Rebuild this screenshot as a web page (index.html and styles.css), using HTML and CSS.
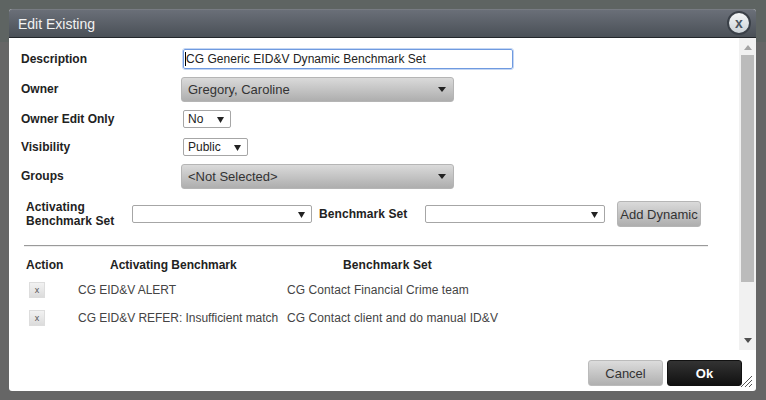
FILE: index.html
```html
<!DOCTYPE html>
<html lang="en">
<head>
    <meta charset="UTF-8">
    <title>Edit Existing</title>
    <link rel="stylesheet" href="styles.css">
</head>
<body>
    <div class="dialog">
        <div class="title-bar">
            <span class="title-text">Edit Existing</span>
            <button class="close-button">x</button>
        </div>

        <div class="dialog-body">
            <div class="form-area">
                <div class="form-row row-description">
                    <label class="row-label">Description</label>
                    <div class="input-wrap">
                        <input class="text-input" type="text" value="CG Generic EID&amp;V Dynamic Benchmark Set">
                        <span class="caret"></span>
                    </div>
                </div>

                <div class="form-row row-owner">
                    <label class="row-label">Owner</label>
                    <div class="drop-button">
                        <span>Gregory, Caroline</span>
                        <span class="drop-arrow"></span>
                    </div>
                </div>

                <div class="form-row row-small">
                    <label class="row-label">Owner Edit Only</label>
                    <select class="plain-select select-no"><option>No</option></select>
                </div>

                <div class="form-row row-small row-visibility">
                    <label class="row-label">Visibility</label>
                    <select class="plain-select select-public"><option>Public</option></select>
                </div>

                <div class="form-row row-groups">
                    <label class="row-label">Groups</label>
                    <div class="drop-button">
                        <span>&lt;Not Selected&gt;</span>
                        <span class="drop-arrow"></span>
                    </div>
                </div>

                <div class="dynamic-row">
                    <label class="dynamic-label">Activating<br>Benchmark Set</label>
                    <select class="plain-select select-wide"><option></option></select>
                    <label class="dynamic-label label-second">Benchmark Set</label>
                    <select class="plain-select select-wide"><option></option></select>
                    <button class="add-button">Add Dynamic</button>
                </div>

                <hr class="divider">

                <div class="list-row list-head">
                    <span class="col-action">Action</span>
                    <span class="col-activating">Activating Benchmark</span>
                    <span class="col-set">Benchmark Set</span>
                </div>
                <div class="list-row list-item">
                    <span class="col-remove"><button class="remove-button">x</button></span>
                    <span class="col-name">CG EID&amp;V ALERT</span>
                    <span class="col-target">CG Contact Financial Crime team</span>
                </div>
                <div class="list-row list-item">
                    <span class="col-remove"><button class="remove-button">x</button></span>
                    <span class="col-name">CG EID&amp;V REFER: Insufficient match</span>
                    <span class="col-target">CG Contact client and do manual ID&amp;V</span>
                </div>
            </div>

            <div class="scrollbar">
                <div class="scroll-up"></div>
                <div class="scroll-thumb"></div>
                <div class="scroll-down"></div>
            </div>
        </div>

        <div class="dialog-footer">
            <button class="footer-button cancel-button">Cancel</button>
            <button class="footer-button ok-button">Ok</button>
            <svg class="resize-grip" width="12" height="12" viewBox="0 0 12 12">
                <path d="M0 11 L11 0 M4 11 L11 4 M8 11 L11 8" stroke="#555" stroke-width="1" fill="none"/>
            </svg>
        </div>
    </div>
</body>
</html>
```

FILE: styles.css
```css
* {
    margin: 0;
    padding: 0;
    box-sizing: border-box;
}

body {
    width: 766px;
    height: 400px;
    padding: 9px 10px 9px 9px;
    overflow: hidden;
    font-family: "Liberation Sans", Arial, sans-serif;
    font-size: 12px;
    color: #333;
    background: linear-gradient(#5e6462 0, #5e6462 42px, #666 42px);
}

.dialog {
    width: 747px;
    height: 382px;
    display: flex;
    flex-direction: column;
    background: white;
    border-radius: 3px;
}

.title-bar {
    height: 29px;
    flex: none;
    display: flex;
    justify-content: space-between;
    align-items: center;
    padding: 0 5px 0 9px;
    background: linear-gradient(#6a6f78, #4a5057);
    border-top: 1px solid #777b82;
    border-bottom: 1px solid #23272b;
    border-radius: 3px 3px 0 0;
}

.title-text {
    font-size: 14px;
    color: #f2f2f2;
}

.close-button {
    width: 24px;
    height: 24px;
    margin-bottom: 2px;
    border: 2px solid #3a4048;
    border-radius: 50%;
    background: linear-gradient(#f4f6f7, #ccd3d8);
    color: #4a5560;
    font-family: "Liberation Sans", Arial, sans-serif;
    font-size: 14px;
    font-weight: bold;
    line-height: 16px;
}

.dialog-body {
    height: 312px;
    flex: none;
    display: flex;
}

.form-area {
    flex: 1;
    padding: 10px 0 0 12px;
}

.form-row {
    display: flex;
    align-items: center;
}

.row-label {
    width: 160px;
    flex: none;
    font-weight: bold;
    color: #222;
}

.row-description {
    height: 22px;
    margin-bottom: 7px;
}

.row-owner,
.row-groups {
    height: 25px;
    margin-bottom: 8px;
}

.row-owner .row-label,
.row-groups .row-label {
    margin-top: -2px;
}

.row-small {
    height: 18px;
    margin-bottom: 10px;
}

.row-visibility {
    margin-bottom: 8px;
}

.row-groups {
    margin-bottom: 12px;
}

.input-wrap {
    position: relative;
    margin-left: 2px;
}

.text-input {
    display: block;
    width: 330px;
    height: 20px;
    padding: 0 2px;
    border: 1px solid #6f9ae0;
    border-radius: 2px;
    outline: 1px solid #c4d6f3;
    font-family: "Liberation Sans", Arial, sans-serif;
    font-size: 12px;
    letter-spacing: 0.05px;
    color: #222;
}

.caret {
    position: absolute;
    left: 2px;
    top: 3px;
    width: 1px;
    height: 14px;
    background: black;
}

.drop-button {
    width: 273px;
    height: 25px;
    display: flex;
    justify-content: space-between;
    align-items: center;
    padding: 0 7px 0 6px;
    background: linear-gradient(#dadada, #aeaeae);
    border: 1px solid #b5b5b5;
    border-radius: 3px;
    font-size: 13px;
    color: #333;
}

.drop-arrow {
    width: 0;
    height: 0;
    border-left: 4px solid transparent;
    border-right: 4px solid transparent;
    border-top: 5px solid #222;
}

.plain-select {
    height: 18px;
    margin-left: 2px;
    padding: 0 0 0 4px;
    border: 1px solid #a6a6a6;
    border-radius: 2px;
    appearance: none;
    font-family: "Liberation Sans", Arial, sans-serif;
    font-size: 12px;
    color: #222;
    background: white url("data:image/svg+xml,%3Csvg xmlns='http://www.w3.org/2000/svg' width='7' height='7'%3E%3Cpath d='M0 1h7L3.5 7z' fill='%23222'/%3E%3C/svg%3E") no-repeat right 6px center;
}

.select-no {
    width: 48px;
}

.select-public {
    width: 65px;
}

.select-wide {
    width: 180px;
    margin-left: 0;
}

.dynamic-row {
    display: flex;
    align-items: center;
    height: 26px;
    padding-left: 5px;
    margin-bottom: 18px;
}

.dynamic-label {
    width: 106px;
    flex: none;
    font-weight: bold;
    line-height: 14px;
    letter-spacing: 0.08px;
    color: #222;
}

.label-second {
    width: 106px;
    margin-left: 7px;
}

.add-button {
    width: 84px;
    height: 26px;
    margin-left: 12px;
    background: linear-gradient(#dadada, #aeaeae);
    border: 1px solid #b5b5b5;
    border-radius: 3px;
    font-family: "Liberation Sans", Arial, sans-serif;
    font-size: 13px;
    color: #333;
}

.divider {
    width: 684px;
    margin-left: 3px;
    border: none;
    border-top: 1px solid #9a9a9a;
    border-bottom: 1px solid #eee;
    margin-bottom: 11px;
}

.list-row {
    display: flex;
    align-items: center;
    padding-left: 5px;
}

.list-head {
    height: 14px;
    margin-bottom: 10px;
    font-weight: bold;
    color: #222;
}

.col-action {
    width: 84px;
}

.col-activating {
    width: 233px;
}

.col-set {
    letter-spacing: 0.12px;
}

.list-item {
    height: 16px;
    margin-bottom: 12px;
    color: #444;
}

.col-remove {
    width: 52px;
    padding-left: 3px;
}

.col-name {
    width: 209px;
    letter-spacing: -0.03px;
}

.col-target {
    letter-spacing: 0.08px;
}

.remove-button {
    display: block;
    width: 16px;
    height: 16px;
    background: linear-gradient(#f2f2f2, #dcdcdc);
    border: 1px solid #ddd;
    font-family: "Liberation Sans", Arial, sans-serif;
    font-size: 9px;
    line-height: 12px;
    color: #555;
}

.scrollbar {
    width: 17px;
    flex: none;
    display: flex;
    flex-direction: column;
    align-items: center;
    background: #f1f1f1;
}

.scroll-up,
.scroll-down {
    width: 0;
    height: 0;
    border-left: 4px solid transparent;
    border-right: 4px solid transparent;
}

.scroll-up {
    margin: 7px 0 5px;
    border-bottom: 5px solid #a3a3a3;
}

.scroll-thumb {
    width: 13px;
    height: 227px;
    background: #bbb;
}

.scroll-down {
    margin-top: 56px;
    border-top: 5px solid #505050;
}

.dialog-footer {
    flex: 1;
    position: relative;
    display: flex;
    justify-content: flex-end;
    align-items: flex-start;
    gap: 4px;
    padding: 10px 14px 0 0;
}

.footer-button {
    width: 75px;
    height: 26px;
    border-radius: 3px;
    font-family: "Liberation Sans", Arial, sans-serif;
    font-size: 13px;
}

.cancel-button {
    background: linear-gradient(#dcdcdc, #b0b0b0);
    border: 1px solid #bbb;
    color: #333;
}

.ok-button {
    background: linear-gradient(#333, #111);
    border: 1px solid #111;
    color: white;
    font-weight: bold;
}

.resize-grip {
    position: absolute;
    right: 3px;
    bottom: 3px;
}
```
